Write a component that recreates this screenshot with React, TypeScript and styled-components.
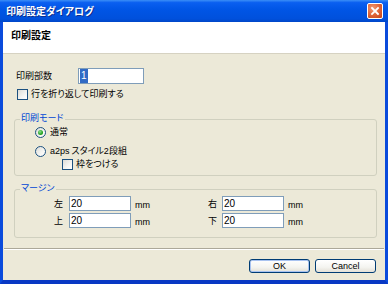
import React from 'react';
import styled, { createGlobalStyle } from 'styled-components';

const GlobalStyle = createGlobalStyle`
  html, body {
    margin: 0;
    padding: 0;
    background: #ffffff;
  }
  body {
    font-family: "Noto Sans CJK JP", "Noto Sans", sans-serif;
    font-size: 9px;
    line-height: 12px;
    color: #000;
    font-feature-settings: "palt";
  }
`;

const Window = styled.div`
  width: 388px;
  height: 284px;
  display: flex;
  flex-direction: column;
`;

const TitleBar = styled.div`
  height: 22px;
  flex: none;
  display: flex;
  align-items: center;
  justify-content: space-between;
  padding: 0 5px 0 6px;
  background: linear-gradient(
    #3b8ef7 0%,
    #0a5ff0 12%,
    #0055e5 45%,
    #0050dc 85%,
    #0047c8 100%
  );
  color: #fff;
  font-weight: bold;
  font-size: 10px;
  text-shadow: 1px 1px 0 #0a2f8f;
`;

const CloseButton = styled.div`
  width: 14px;
  height: 14px;
  border: 1px solid #fff;
  border-radius: 2px;
  background: radial-gradient(circle at 35% 30%, #f09a76 0%, #e06538 50%, #c2431a 100%);
  display: flex;
  align-items: center;
  justify-content: center;
`;

const Frame = styled.div`
  flex: 1;
  display: flex;
  flex-direction: column;
  border-left: 3px solid #0a4bdc;
  border-right: 3px solid #0a4bdc;
  border-bottom: 4px solid #0838c4;
  background: #ece9d8;
`;

const Header = styled.div`
  height: 32px;
  box-sizing: border-box;
  flex: none;
  background: #fff;
  padding: 7px 0 0 8px;
  font-weight: bold;
  font-size: 10px;
  border-bottom: 1px solid #d6d2c2;
`;

const Content = styled.div`
  display: flex;
  flex-direction: column;
  padding: 0 8px 0 11px;
`;

const Row = styled.div<{ $top: number; $indent: number }>`
  display: flex;
  align-items: center;
  margin-top: ${(p) => p.$top}px;
  padding-left: ${(p) => p.$indent}px;
  height: 12px;
`;

const CopiesRow = styled.div`
  display: flex;
  align-items: center;
  margin-top: 14px;
  padding-left: 2px;
  height: 16px;
`;

const FieldLabel = styled.span<{ $width: number }>`
  width: ${(p) => p.$width}px;
  flex: none;
`;

const TextBox = styled.div<{ $width: number; $height: number }>`
  width: ${(p) => p.$width}px;
  height: ${(p) => p.$height}px;
  box-sizing: border-box;
  border: 1px solid #7f9db9;
  background: #fff;
  font-family: "Liberation Sans", Arial, sans-serif;
  font-size: 10px;
  line-height: ${(p) => p.$height - 2}px;
  padding-left: 1px;
  display: flex;
`;

const Selected = styled.span`
  background: #316ac5;
  color: #fff;
  padding: 0 1px;
`;

const CheckBox = styled.span`
  width: 11px;
  height: 11px;
  box-sizing: border-box;
  flex: none;
  border: 1px solid #1c5180;
  background: linear-gradient(135deg, #dcdcd7 0%, #f5f5f2 60%, #ffffff 100%);
  margin-right: 3px;
`;

const Radio = styled.span<{ $checked?: boolean }>`
  width: 11px;
  height: 11px;
  box-sizing: border-box;
  flex: none;
  border: 1px solid #1c5180;
  border-radius: 50%;
  background: linear-gradient(135deg, #dcdcd7 0%, #f5f5f2 60%, #ffffff 100%);
  margin-right: 4px;
  display: flex;
  align-items: center;
  justify-content: center;
  &::after {
    content: '';
    display: ${(p) => (p.$checked ? 'block' : 'none')};
    width: 5px;
    height: 5px;
    border-radius: 50%;
    background: radial-gradient(circle at 40% 35%, #8fe08f 0%, #21a121 60%, #1a8a1a 100%);
  }
`;

const Latin = styled.span`
  font-family: "Liberation Sans", Arial, sans-serif;
`;

const Group = styled.div<{ $top: number }>`
  position: relative;
  margin-top: ${(p) => p.$top}px;
  border: 1px solid #d0d0bf;
  border-radius: 3px;
  display: flex;
  flex-direction: column;
`;

const Legend = styled.span`
  position: absolute;
  top: -8px;
  left: 5px;
  padding: 0 1px;
  background: #ece9d8;
  color: #0046d5;
`;

const ModeBody = styled.div`
  padding: 6px 0 5px 0;
  display: flex;
  flex-direction: column;
`;

const MarginGrid = styled.div`
  display: grid;
  grid-template-columns: 15px 62px 77px 14px 62px auto;
  grid-auto-rows: 15px;
  row-gap: 2px;
  align-items: center;
  padding: 6px 0 9px 39px;
`;

const Unit = styled.span`
  font-family: "Liberation Sans", Arial, sans-serif;
  padding-left: 4px;
  margin-top: 3px;
`;

const Separator = styled.div`
  margin: 10px 1px 0 1px;
  height: 1px;
  background: #aca899;
  border-bottom: 1px solid #ffffff;
`;

const Footer = styled.div`
  display: flex;
  justify-content: flex-end;
  gap: 5px;
  padding: 9px 9px 0 0;
`;

const Button = styled.div<{ $default?: boolean }>`
  width: 61px;
  height: 14px;
  box-sizing: border-box;
  border: 1px solid #003c74;
  border-radius: 3px;
  background: linear-gradient(#ffffff 0%, #f4f4f0 60%, #e3e0d6 100%);
  box-shadow: ${(p) => (p.$default ? 'inset 0 0 0 1px #a9c3f0' : 'none')};
  font-family: "Liberation Sans", Arial, sans-serif;
  font-size: 9px;
  line-height: 12px;
  text-align: center;
`;

const App: React.FC = () => {
  return (
    <Window>
      <GlobalStyle />
      <TitleBar>
        <span>印刷設定ダイアログ</span>
        <CloseButton>
          <svg width="10" height="10" viewBox="0 0 10 10">
            <path d="M2 2 L8 8 M8 2 L2 8" stroke="#fff" strokeWidth="1.8" strokeLinecap="square" />
          </svg>
        </CloseButton>
      </TitleBar>
      <Frame>
        <Header>印刷設定</Header>
        <Content>
          <CopiesRow>
            <FieldLabel $width={62}>印刷部数</FieldLabel>
            <TextBox $width={66} $height={16}>
              <Selected>1</Selected>
            </TextBox>
          </CopiesRow>
          <Row $top={4} $indent={3}>
            <CheckBox />
            <span>行を折り返して印刷する</span>
          </Row>
          <Group $top={19}>
            <Legend>印刷モード</Legend>
            <ModeBody>
              <Row $top={0} $indent={20}>
                <Radio $checked />
                <span>通常</span>
              </Row>
              <Row $top={7} $indent={20}>
                <Radio />
                <span>
                  <Latin>a2ps</Latin> スタイル<Latin>2</Latin>段組
                </span>
              </Row>
              <Row $top={1} $indent={47}>
                <CheckBox />
                <span>枠をつける</span>
              </Row>
            </ModeBody>
          </Group>
          <Group $top={13}>
            <Legend>マージン</Legend>
            <MarginGrid>
              <span>左</span>
              <TextBox $width={62} $height={15}>20</TextBox>
              <Unit>mm</Unit>
              <span>右</span>
              <TextBox $width={62} $height={15}>20</TextBox>
              <Unit>mm</Unit>
              <span>上</span>
              <TextBox $width={62} $height={15}>20</TextBox>
              <Unit>mm</Unit>
              <span>下</span>
              <TextBox $width={62} $height={15}>20</TextBox>
              <Unit>mm</Unit>
            </MarginGrid>
          </Group>
        </Content>
        <Separator />
        <Footer>
          <Button $default>OK</Button>
          <Button>Cancel</Button>
        </Footer>
      </Frame>
    </Window>
  );
};

export default App;
